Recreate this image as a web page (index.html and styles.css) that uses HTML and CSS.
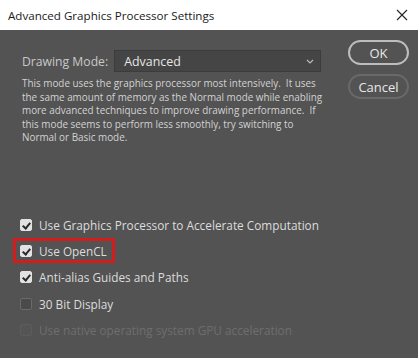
FILE: index.html
```html
<!DOCTYPE html>
<html lang="en">
<head>
  <meta charset="UTF-8">
  <title>Advanced Graphics Processor Settings</title>
  <link rel="stylesheet" href="styles.css">
</head>
<body>
  <div class="titlebar">
    <span class="title">Advanced Graphics Processor Settings</span>
    <svg class="close" width="12" height="12" viewBox="0 0 12 12">
      <path d="M1 1 L11 11 M11 1 L1 11" stroke="#222" stroke-width="1.1" fill="none"/>
    </svg>
  </div>

  <div class="dialog">
    <div class="top">
      <div class="settings">
        <div class="mode-row">
          <span class="mode-label">Drawing Mode:</span>
          <div class="select">
            <span>Advanced</span>
            <svg width="8" height="5" viewBox="0 0 8 5">
              <path d="M1 1 L4 4 L7 1" stroke="#bdbdbd" stroke-width="1.1" fill="none"/>
            </svg>
          </div>
        </div>
        <p class="desc">This mode uses the graphics processor most intensively.&nbsp; It uses<br>the same amount of memory as the Normal mode while enabling<br>more advanced techniques to improve drawing performance.&nbsp; If<br>this mode seems to perform less smoothly, try switching to<br>Normal or Basic mode.</p>
      </div>
      <div class="buttons">
        <div class="btn btn-ok">OK</div>
        <div class="btn btn-cancel">Cancel</div>
      </div>
    </div>

    <ul class="options">
      <li><span class="check on"></span>Use Graphics Processor to Accelerate Computation</li>
      <li><span class="highlight"><span class="check on"></span>Use OpenCL</span></li>
      <li><span class="check on"></span>Anti-alias Guides and Paths</li>
      <li><span class="check"></span>30 Bit Display</li>
      <li class="disabled"><span class="check"></span>Use native operating system GPU acceleration</li>
    </ul>
  </div>
</body>
</html>
```

FILE: styles.css
```css
* {
  margin: 0;
  padding: 0;
  box-sizing: border-box;
}

body {
  width: 418px;
  height: 358px;
  font-family: "Open Sans", "Noto Sans", sans-serif;
  background-color: #535353;
  overflow: hidden;
}

.titlebar {
  height: 30px;
  background-color: #ffffff;
  display: flex;
  align-items: center;
  justify-content: space-between;
  padding: 0 8px 0 8px;
}

.title {
  font-size: 11.6px;
  color: #1a1a1a;
}

.close {
  margin-right: 2px;
}

.dialog {
  height: 328px;
  background-color: #535353;
  padding: 10px 9px 0 22px;
  color: #d4d4d4;
}

.top {
  display: flex;
  justify-content: space-between;
}

.settings {
  width: 299px;
  padding-top: 10px;
}

.mode-row {
  display: flex;
  align-items: center;
  gap: 6px;
}

.mode-label {
  font-size: 12.2px;
  color: #c8c8c8;
  white-space: nowrap;
}

.select {
  flex: 1;
  height: 22px;
  background-color: #454545;
  border: 1px solid #3c3c3c;
  display: flex;
  align-items: center;
  justify-content: space-between;
  padding: 0 6px 0 9px;
  font-size: 12.4px;
  color: #e6e6e6;
}

.desc {
  margin-top: 5px;
  font-size: 9.9px;
  line-height: 13.5px;
  color: #d2d2d2;
  white-space: nowrap;
}

.buttons {
  display: flex;
  flex-direction: column;
  gap: 9px;
}

.btn {
  width: 61px;
  height: 25px;
  border-radius: 13px;
  display: flex;
  align-items: center;
  justify-content: center;
  font-size: 13px;
  color: #e8e8e8;
}

.btn-ok {
  border: 2px solid #bdbdbd;
}

.btn-cancel {
  border: 2px solid #696969;
}

.options {
  list-style-type: none;
  margin-top: 67px;
  margin-left: -2px;
}

.options li {
  height: 26.3px;
  display: flex;
  align-items: center;
  font-size: 11.8px;
  color: #dcdcdc;
}

.check {
  width: 12px;
  height: 12px;
  border-radius: 2px;
  margin-right: 7px;
  background-color: #4a4a4a;
  border: 1px solid #6a6a6a;
  position: relative;
}

.check.on {
  background-color: #e2e2e2;
  border-color: #e2e2e2;
}

.check.on::after {
  content: '';
  position: absolute;
  left: 3px;
  top: 1px;
  width: 3px;
  height: 6px;
  border-right: 2px solid #2a2a2a;
  border-bottom: 2px solid #2a2a2a;
  transform: rotate(40deg);
}

.highlight {
  display: flex;
  align-items: center;
  border: 3px solid #d21d1d;
  margin-left: -7px;
  padding: 0 5px 0 4px;
  height: 25px;
}

.options li.disabled {
  color: #6e6e6e;
}

.disabled .check {
  background-color: #555;
  border-color: #5c5c5c;
}
```
